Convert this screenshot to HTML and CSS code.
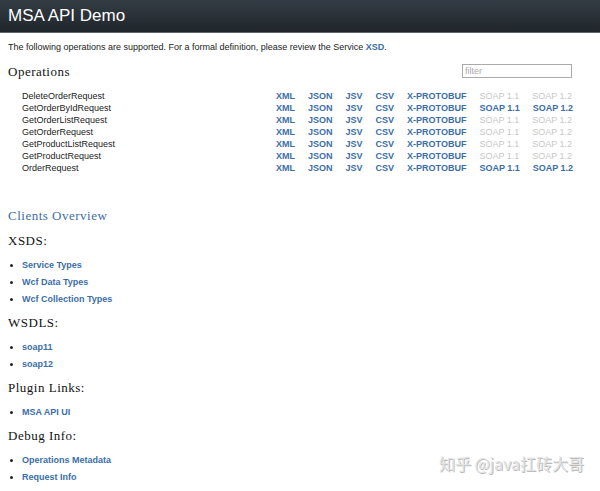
FILE: index.html
```html
<!DOCTYPE html>
<html lang="en">

<head>
    <meta charset="UTF-8">
    <title>MSA API Demo</title>
    <link rel="stylesheet" href="styles.css">
</head>

<body>
    <header class="top">
        <h1>MSA API Demo</h1>
    </header>

    <div class="wrapper">
        <p class="intro">The following operations are supported. For a formal definition, please review the Service <a href="#">XSD</a>.</p>

        <div class="ops-head">
            <h3>Operations</h3>
            <input class="filter" type="text" placeholder="filter">
        </div>

        <section class="operations">
            <div class="op">
                <span class="name">DeleteOrderRequest</span>
                <a href="#">XML</a><a href="#">JSON</a><a href="#">JSV</a><a href="#">CSV</a><a href="#">X-PROTOBUF</a>
                <span class="off">SOAP 1.1</span><span class="off">SOAP 1.2</span>
            </div>
            <div class="op">
                <span class="name">GetOrderByIdRequest</span>
                <a href="#">XML</a><a href="#">JSON</a><a href="#">JSV</a><a href="#">CSV</a><a href="#">X-PROTOBUF</a>
                <a href="#">SOAP 1.1</a><a href="#">SOAP 1.2</a>
            </div>
            <div class="op">
                <span class="name">GetOrderListRequest</span>
                <a href="#">XML</a><a href="#">JSON</a><a href="#">JSV</a><a href="#">CSV</a><a href="#">X-PROTOBUF</a>
                <span class="off">SOAP 1.1</span><span class="off">SOAP 1.2</span>
            </div>
            <div class="op">
                <span class="name">GetOrderRequest</span>
                <a href="#">XML</a><a href="#">JSON</a><a href="#">JSV</a><a href="#">CSV</a><a href="#">X-PROTOBUF</a>
                <span class="off">SOAP 1.1</span><span class="off">SOAP 1.2</span>
            </div>
            <div class="op">
                <span class="name">GetProductListRequest</span>
                <a href="#">XML</a><a href="#">JSON</a><a href="#">JSV</a><a href="#">CSV</a><a href="#">X-PROTOBUF</a>
                <span class="off">SOAP 1.1</span><span class="off">SOAP 1.2</span>
            </div>
            <div class="op">
                <span class="name">GetProductRequest</span>
                <a href="#">XML</a><a href="#">JSON</a><a href="#">JSV</a><a href="#">CSV</a><a href="#">X-PROTOBUF</a>
                <span class="off">SOAP 1.1</span><span class="off">SOAP 1.2</span>
            </div>
            <div class="op">
                <span class="name">OrderRequest</span>
                <a href="#">XML</a><a href="#">JSON</a><a href="#">JSV</a><a href="#">CSV</a><a href="#">X-PROTOBUF</a>
                <a href="#">SOAP 1.1</a><a href="#">SOAP 1.2</a>
            </div>
        </section>

        <h3 class="clients"><a href="#">Clients Overview</a></h3>

        <h3>XSDS:</h3>
        <ul>
            <li><a href="#">Service Types</a></li>
            <li><a href="#">Wcf Data Types</a></li>
            <li><a href="#">Wcf Collection Types</a></li>
        </ul>

        <h3>WSDLS:</h3>
        <ul>
            <li><a href="#">soap11</a></li>
            <li><a href="#">soap12</a></li>
        </ul>

        <h3>Plugin Links:</h3>
        <ul>
            <li><a href="#">MSA API UI</a></li>
        </ul>

        <h3>Debug Info:</h3>
        <ul>
            <li><a href="#">Operations Metadata</a></li>
            <li><a href="#">Request Info</a></li>
        </ul>
    </div>

    <div class="mark">知乎 @java扛砖大哥</div>
</body>

</html>
```

FILE: styles.css
```css
* {
    margin: 0;
    padding: 0;
    box-sizing: border-box;
}

body {
    font-family: "Liberation Sans", Arial, sans-serif;
    font-size: 9px;
    color: #222;
    background: #fff;
    position: relative;
    min-height: 491px;
}

a {
    color: #3b6ea6;
    font-weight: bold;
    text-decoration: none;
}

.top {
    height: 33px;
    background: linear-gradient(#343d45, #1f252a);
    border-bottom: 1px solid #5c636a;
}

.top h1 {
    font-size: 17px;
    font-weight: normal;
    color: #fff;
    line-height: 32px;
    padding-left: 8px;
}

.wrapper {
    padding: 0 8px;
}

.intro {
    margin-top: 8px;
    line-height: 12px;
}

h3 {
    font-family: "Liberation Serif", "Times New Roman", serif;
    font-size: 13px;
    font-weight: normal;
    letter-spacing: 0.5px;
    line-height: 16px;
    color: #111;
}

h3 a {
    font-weight: normal;
}

.ops-head {
    display: flex;
    justify-content: space-between;
    align-items: center;
    margin-top: 11px;
    padding-right: 20px;
}

.filter {
    width: 110px;
    height: 14px;
    border: 1px solid #aaa;
    font-family: "Liberation Sans", Arial, sans-serif;
    font-size: 9px;
    padding: 0 2px;
    margin-top: -2px;
}

.filter::placeholder {
    color: #aaa;
}

.operations {
    margin-top: 10px;
    padding-left: 14px;
}

.op {
    display: flex;
    gap: 13px;
    line-height: 12px;
    white-space: nowrap;
}

.op .name {
    width: 241px;
}

.op .off {
    color: #c8c8c8;
}

.clients {
    margin-top: 34px;
    margin-bottom: 9px;
}

ul {
    margin: 7.5px 0;
    padding-left: 14px;
}

li {
    line-height: 17px;
}

.mark {
    position: absolute;
    right: 16px;
    bottom: 18px;
    font-family: "Noto Sans CJK SC", "Noto Sans", sans-serif;
    font-size: 16px;
    color: #e4e4e4;
    text-shadow: 1px 1px 0 #bbb;
}
```
